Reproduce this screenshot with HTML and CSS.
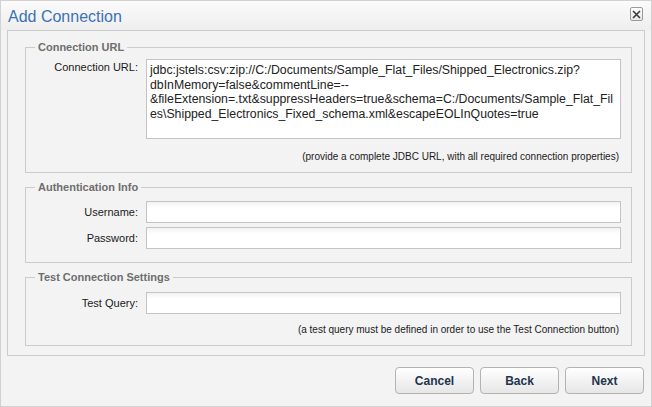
FILE: index.html
```html
<!DOCTYPE html>
<html>
<head>
<meta charset="utf-8">
<link rel="stylesheet" href="styles.css">
</head>
<body>
<div class="dialog">
  <div class="titlebar">
    <span class="title">Add Connection</span>
    <span class="close"><svg width="9" height="9" viewBox="0 0 9 9"><path d="M1 1 L8 8 M8 1 L1 8" stroke="#3a3a3a" stroke-width="1.6"/></svg></span>
  </div>
  <div class="panel">
    <fieldset class="group g1">
      <legend>Connection URL</legend>
      <div class="row">
        <label class="lbl lbl-top">Connection URL:</label>
        <div class="textarea">jdbc:jstels:csv:zip://C:/Documents/Sample_Flat_Files/Shipped_Electronics.zip?<br>dbInMemory=false&amp;commentLine=--<br>&amp;fileExtension=.txt&amp;suppressHeaders=true&amp;schema=C:/Documents/Sample_Flat_Fil<br>es\Shipped_Electronics_Fixed_schema.xml&amp;escapeEOLInQuotes=true</div>
      </div>
      <div class="hint">(provide a complete JDBC URL, with all required connection properties)</div>
    </fieldset>
    <fieldset class="group g2">
      <legend>Authentication Info</legend>
      <div class="row">
        <label class="lbl">Username:</label>
        <div class="input"></div>
      </div>
      <div class="row">
        <label class="lbl">Password:</label>
        <div class="input"></div>
      </div>
    </fieldset>
    <fieldset class="group g3">
      <legend>Test Connection Settings</legend>
      <div class="row">
        <label class="lbl">Test Query:</label>
        <div class="input"></div>
      </div>
      <div class="hint hint2">(a test query must be defined in order to use the Test Connection button)</div>
    </fieldset>
  </div>
  <div class="footer">
    <button class="btn">Cancel</button>
    <button class="btn">Back</button>
    <button class="btn">Next</button>
  </div>
</div>
</body>
</html>
```
FILE: styles.css
```css
html, body {
  margin: 0;
  padding: 0;
}
body {
  width: 652px;
  height: 407px;
  overflow: hidden;
  font-family: "Liberation Sans", Arial, sans-serif;
}
.dialog {
  box-sizing: border-box;
  width: 652px;
  height: 407px;
  border: 1px solid #d2d2d2;
  background: #f3f3f3;
  display: flex;
  flex-direction: column;
}
.titlebar {
  height: 29px;
  flex: none;
  display: flex;
  align-items: flex-start;
  justify-content: space-between;
  background: linear-gradient(#fbfbfb, #eeeeee);
  padding: 0 7px 0 7px;
}
.title {
  font-size: 16px;
  color: #3b72b6;
  line-height: 16px;
  margin-top: 8px;
}
.close {
  box-sizing: border-box;
  width: 13px;
  height: 14px;
  margin-top: 6px;
  margin-right: 1px;
  border: 1px solid #9a9a9a;
  border-radius: 2px;
  background: linear-gradient(#ffffff, #e8e8e8);
  display: flex;
  align-items: center;
  justify-content: center;
}
.panel {
  margin: 0 6px;
  border: 1px solid #cbcbcb;
  padding: 9px 12px 9px 17px;
}
.group {
  margin: 0;
  border: 1px solid #cbcbcb;
  padding: 0 10px 0 0;
  min-width: 0;
}
.group + .group {
  margin-top: 7px;
}
.group legend {
  font-size: 11px;
  font-weight: bold;
  color: #6e6e6e;
  line-height: 14px;
  padding: 0 3px;
  margin-left: 9px;
}
.g1 { padding-top: 5px; padding-bottom: 8px; }
.g2 { padding-top: 7px; padding-bottom: 13px; }
.g3 { padding-top: 8px; padding-bottom: 8px; }
.row {
  display: grid;
  grid-template-columns: 112px 1fr;
  column-gap: 8px;
  align-items: center;
}
.row + .row {
  margin-top: 4px;
}
.lbl {
  text-align: right;
  font-size: 11px;
  color: #1a1a1a;
}
.lbl-top {
  align-self: start;
  padding-top: 2px;
}
.textarea {
  box-sizing: border-box;
  height: 80px;
  border: 1px solid #c4c4c4;
  background: #ffffff;
  padding: 3px 3px;
  font-size: 12.3px;
  line-height: 14.5px;
  color: #222;
  white-space: nowrap;
  overflow: hidden;
}
.input {
  box-sizing: border-box;
  height: 22px;
  border: 1px solid #c4c4c4;
  background: linear-gradient(#f1f3f3, #ffffff 6px);
}
.hint {
  text-align: right;
  font-size: 10px;
  line-height: 14px;
  color: #1a1a1a;
  margin-top: 11px;
  padding-right: 2px;
}
.hint2 {
  margin-top: 9px;
}
.footer {
  flex: 1;
  display: flex;
  justify-content: flex-end;
  align-items: flex-start;
  gap: 6px;
  padding: 11px 7px 0 0;
}
.btn {
  box-sizing: border-box;
  width: 79px;
  height: 27px;
  border: 1px solid #b3b3b3;
  border-radius: 4px;
  background: linear-gradient(#ffffff, #e6e6e6);
  font-family: "Liberation Sans", Arial, sans-serif;
  font-size: 12px;
  font-weight: bold;
  color: #22344d;
  padding: 0;
}
```
